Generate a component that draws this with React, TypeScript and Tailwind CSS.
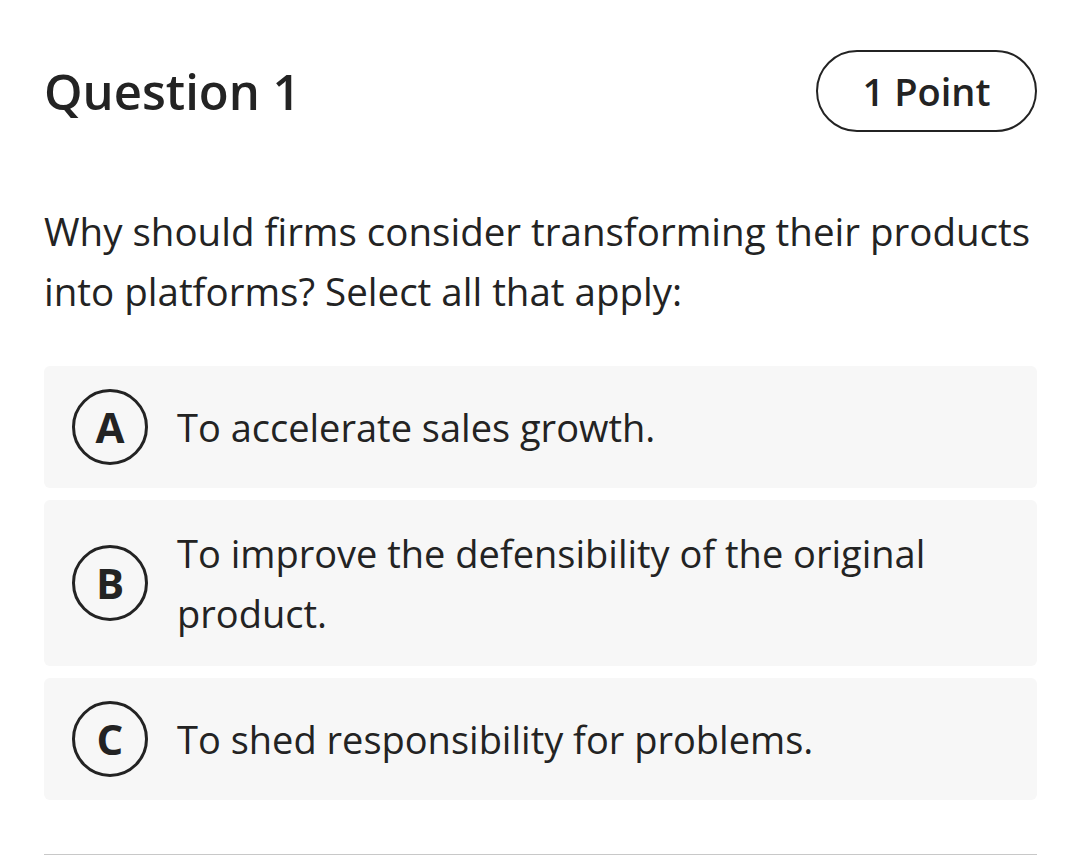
const OPTIONS = [
  { key: 'A', text: 'To accelerate sales growth.' },
  { key: 'B', text: 'To improve the defensibility of the original product.' },
  { key: 'C', text: 'To shed responsibility for problems.' },
];

export default function App() {
  return (
    <div
      className="min-h-screen bg-white text-[#232323] px-[44px] pt-[50px]"
      style={{ fontFamily: '"Open Sans", sans-serif' }}
    >
      {/* Header */}
      <div className="flex h-[82px] w-[993px] items-center justify-between">
        <h1 className="m-0 text-[49px] font-semibold leading-none">Question 1</h1>
        <div className="flex h-[82px] w-[221px] items-center justify-center rounded-full border-2 border-[#232323] text-[38px] font-semibold leading-none">
          1 Point
        </div>
      </div>

      {/* Prompt */}
      <p className="mt-[69px] w-[993px] text-[38.5px] leading-[60px]">
        Why should firms consider transforming their products into platforms? Select all that apply:
      </p>

      {/* Options */}
      <div className="mt-[45px] flex w-[993px] flex-col gap-[12px]">
        {OPTIONS.map(opt => (
          <div
            key={opt.key}
            className="flex min-h-[120px] items-center gap-[29px] rounded-[6px] bg-[#f7f7f7] py-[23px] pl-[28px] pr-[60px]"
          >
            <div className="flex h-[76px] w-[76px] shrink-0 items-center justify-center rounded-full border-[3px] border-[#232323] text-[42px] font-bold leading-none">
              {opt.key}
            </div>
            <span className="text-[38px] leading-[60px]">{opt.text}</span>
          </div>
        ))}
      </div>

      <div className="mt-[54px] h-[2px] w-[993px] bg-[#c8c8c8]" />
    </div>
  );
}
